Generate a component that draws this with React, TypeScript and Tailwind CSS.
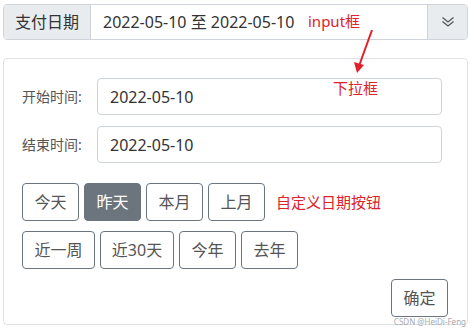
import React from "react";

const font = "font-['Noto_Sans','Noto_Sans_CJK_SC',sans-serif]";

const QuickBtn = ({ title, active, w }: { title: string; active?: boolean; w: string }) => (
  <button
    className={`${w} h-[38px] rounded-[4px] border text-[16px] ${
      active ? "bg-[#6c757d] border-[#6c757d] text-white" : "bg-white border-[#6c757d] text-[#555]"
    }`}
  >
    {title}
  </button>
);

const App = () => {
  return (
    <div className={`relative w-[474px] h-[330px] bg-white pl-[3px] pt-[4px] ${font}`}>
      {/* input group */}
      <div className="flex h-[36px] w-[465px] rounded-[4px] border border-[#ced4da] overflow-hidden">
        <div className="w-[87px] flex items-center justify-center bg-[#e9ecef] border-r border-[#ced4da] text-[16px] text-[#333]">
          支付日期
        </div>
        <div className="flex-1 flex items-center pl-[12px] text-[16px] text-[#333]">
          2022-05-10 至 2022-05-10
        </div>
        <div className="w-[40px] flex items-center justify-center bg-[#e9ecef] border-l border-[#ced4da]">
          <svg width="14" height="12" viewBox="0 0 14 12" fill="none" stroke="#555" strokeWidth="1.3">
            <path d="M1.5 1.5 L7 6 L12.5 1.5" />
            <path d="M1.5 5.5 L7 10 L12.5 5.5" />
          </svg>
        </div>
      </div>

      {/* dropdown panel */}
      <div className="mt-[18px] w-[465px] h-[267px] rounded-[4px] border border-[#dee2e6] pl-[18px] pr-[19px] pt-[19px]">
        <div className="flex items-center h-[37px] mr-[6px]">
          <span className="w-[75px] text-[14px] text-[#555]">开始时间:</span>
          <div className="flex-1 h-full flex items-center pl-[12px] rounded-[4px] border border-[#ced4da] text-[16px] text-[#333]">
            2022-05-10
          </div>
        </div>
        <div className="flex items-center h-[37px] mt-[11px] mr-[6px]">
          <span className="w-[75px] text-[14px] text-[#555]">结束时间:</span>
          <div className="flex-1 h-full flex items-center pl-[12px] rounded-[4px] border border-[#ced4da] text-[16px] text-[#333]">
            2022-05-10
          </div>
        </div>

        <div className="flex items-center gap-[5px] mt-[20px]">
          <QuickBtn title="今天" w="w-[57px]" />
          <QuickBtn title="昨天" w="w-[57px]" active />
          <QuickBtn title="本月" w="w-[57px]" />
          <QuickBtn title="上月" w="w-[57px]" />
          <span className="ml-[6px] text-[15px] text-[#e0202a]">自定义日期按钮</span>
        </div>
        <div className="flex items-center gap-[5px] mt-[10px]">
          <QuickBtn title="近一周" w="w-[73px]" />
          <QuickBtn title="近30天" w="w-[74px]" />
          <QuickBtn title="今年" w="w-[57px]" />
          <QuickBtn title="去年" w="w-[57px]" />
        </div>
        <div className="flex justify-end mt-[10px]">
          <QuickBtn title="确定" w="w-[57px]" />
        </div>
      </div>

      {/* annotations */}
      <span className="absolute left-[308px] top-[10px] text-[15px] text-[#e0202a]">input框</span>
      <span className="absolute left-[333px] top-[77px] text-[15px] text-[#e0202a]">下拉框</span>
      <svg className="absolute left-0 top-0" width="474" height="330">
        <line x1="372" y1="30" x2="359" y2="66" stroke="#e0202a" strokeWidth="2" />
        <path d="M354 62 L357 73 L364 65 Z" fill="#e0202a" />
      </svg>
      <span className="absolute right-[8px] bottom-[2px] text-[8px] text-[#aaa]">CSDN @HeiDi-Feng</span>
    </div>
  );
};

export default App;
